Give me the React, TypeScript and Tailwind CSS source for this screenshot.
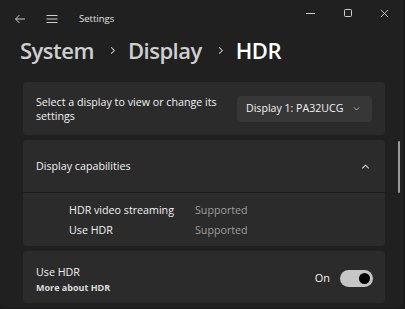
import { useState } from "react";

const font = { fontFamily: '"Open Sans", "Noto Sans", sans-serif' };

function Chevron({ up = false, className = "" }: { up?: boolean; className?: string }) {
  return (
    <svg viewBox="0 0 12 12" className={className} fill="none" stroke="currentColor" strokeWidth="1.1">
      {up ? <path d="M2.5 8 L6 4.5 L9.5 8" /> : <path d="M2.5 4.5 L6 8 L9.5 4.5" />}
    </svg>
  );
}

export default function App() {
  const [hdr, setHdr] = useState(true);

  return (
    <div className="h-[309px] w-[405px] overflow-hidden bg-[#1a1a1a] text-white" style={font}>
      <div className="flex h-[308px] w-[403px] flex-col rounded-b-[6px] bg-[#202020]">
        {/* title bar */}
        <div className="flex h-[36px] items-start justify-between">
          <div className="flex h-[38px] items-center pl-[14px]">
            <svg viewBox="0 0 12 12" className="h-[12px] w-[12px] text-[#cfcfcf]" fill="none" stroke="currentColor" strokeWidth="1">
              <path d="M11 6 H1.5 M5.5 2 L1.5 6 L5.5 10" />
            </svg>
            <svg viewBox="0 0 12 12" className="ml-[20px] h-[12px] w-[12px] text-[#cfcfcf]" fill="none" stroke="currentColor" strokeWidth="1">
              <path d="M0.5 2.5 H11.5 M0.5 6 H11.5 M0.5 9.5 H11.5" />
            </svg>
            <span className="ml-[21px] text-[9.5px] text-[#e0e0e0]">Settings</span>
          </div>
          <div className="flex">
            <div className="grid h-[26px] w-[37px] place-items-center">
              <div className="h-px w-[9px] bg-[#d0d0d0]" />
            </div>
            <div className="grid h-[26px] w-[37px] place-items-center">
              <div className="h-[8px] w-[8px] rounded-[1.5px] border border-[#d0d0d0]" />
            </div>
            <div className="grid h-[26px] w-[37px] place-items-center">
              <svg viewBox="0 0 10 10" className="h-[9px] w-[9px] text-[#d0d0d0]" fill="none" stroke="currentColor" strokeWidth="1">
                <path d="M1 1 L9 9 M9 1 L1 9" />
              </svg>
            </div>
          </div>
        </div>

        {/* breadcrumb */}
        <div className="-mt-[1px] flex h-[30px] items-center pl-[20px] text-[22px] font-semibold leading-[30px] tracking-[-0.5px]">
          <span className="text-[#cfcfcf]">System</span>
          <Chevron className="ml-[13px] mr-[10px] h-[11px] w-[11px] -rotate-90 text-[#cfcfcf]" />
          <span className="text-[#cfcfcf]">Display</span>
          <Chevron className="ml-[13px] mr-[10px] h-[11px] w-[11px] -rotate-90 text-[#cfcfcf]" />
          <span className="text-white">HDR</span>
        </div>

        <div className="mt-[17px] flex">
          <div className="flex flex-1 flex-col gap-[5px] pl-[23px] pr-[13px]">
            {/* select display card */}
            <div className="flex h-[53px] items-center justify-between rounded-[4px] bg-[#2b2b2b] pl-[13px] pr-[13px]">
              <div className="text-[10.7px] leading-[14px] text-[#f2f2f2]">
                Select a display to view or change its
                <br />
                settings
              </div>
              <div className="flex h-[26px] w-[135px] shrink-0 items-center justify-between whitespace-nowrap rounded-[4px] bg-[#373737] pl-[9px] pr-[11px] text-[10.6px] text-[#f2f2f2]">
                <span>Display 1: PA32UCG</span>
                <Chevron className="h-[9px] w-[9px] text-[#bdbdbd]" />
              </div>
            </div>

            {/* capabilities card */}
            <div className="rounded-[4px] bg-[#2b2b2b]">
              <div className="flex h-[53px] items-center justify-between border-b border-[#1d1d1d] pl-[13px] pr-[14px]">
                <span className="text-[10.7px] text-[#f2f2f2]">Display capabilities</span>
                <Chevron up className="h-[11px] w-[11px] text-[#e0e0e0]" />
              </div>
              <div className="grid h-[53px] grid-cols-[126px_1fr] content-center gap-y-[6px] pl-[46px] text-[10.7px] leading-[14px]">
                <span className="text-[#f2f2f2]">HDR video streaming</span>
                <span className="text-[#9e9e9e]">Supported</span>
                <span className="text-[#f2f2f2]">Use HDR</span>
                <span className="text-[#9e9e9e]">Supported</span>
              </div>
            </div>

            {/* use hdr card */}
            <div className="flex h-[52px] items-center justify-between rounded-[4px] bg-[#2b2b2b] pl-[13px] pr-[12px]">
              <div className="flex flex-col pt-[5px] leading-[15px]">
                <span className="text-[10.7px] text-[#f2f2f2]">Use HDR</span>
                <span className="text-[9px] font-bold text-[#dcdcdc]">More about HDR</span>
              </div>
              <div className="flex items-center pt-[2px]">
                <span className="text-[11px] text-[#f2f2f2]">On</span>
                <button
                  onClick={() => setHdr(!hdr)}
                  className="ml-[10px] flex h-[17px] w-[33px] items-center justify-end rounded-full bg-[#c6c6c6] pr-[3px]"
                >
                  <span className="h-[11px] w-[11px] rounded-full bg-black" />
                </button>
              </div>
            </div>
          </div>

          {/* scrollbar */}
          <div className="w-[5px] pt-[59px]">
            <div className="h-[52px] w-[2px] rounded-full bg-[#9a9a9a]" />
          </div>
        </div>
      </div>
    </div>
  );
}
